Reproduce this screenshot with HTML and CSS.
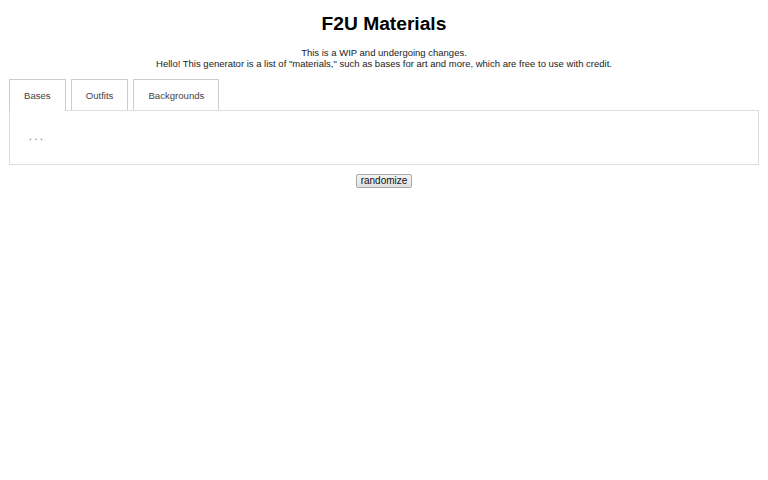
FILE: index.html
```html
<!DOCTYPE html>
<html>
<head>
<meta charset="utf-8">
<link rel="stylesheet" href="styles.css">
</head>
<body>
<h1 class="title">F2U Materials</h1>
<p class="intro">This is a WIP and undergoing changes.<br>Hello! This generator is a list of "materials," such as bases for art and more, which are free to use with credit.</p>
<div class="tabs">
  <ul class="tab-list">
    <li class="tab active">Bases</li>
    <li class="tab">Outfits</li>
    <li class="tab">Backgrounds</li>
  </ul>
  <div class="panel">. . .</div>
</div>
<div class="actions"><button class="btn">randomize</button></div>
</body>
</html>
```
FILE: styles.css
```css
body {
  margin: 8px 9px;
  font-family: "Liberation Sans", Arial, sans-serif;
  color: #222;
  background: #fff;
}
.title {
  margin: 5px 0 0;
  font-size: 19.2px;
  line-height: 22px;
  text-align: center;
  color: #000;
}
.intro {
  margin: 12px 0 0;
  font-size: 9.5px;
  line-height: 11px;
  text-align: center;
  color: #222;
}
.tabs {
  margin-top: 10px;
}
.tab-list {
  list-style: none;
  margin: 0;
  padding: 0;
  display: flex;
  gap: 5px;
  position: relative;
  z-index: 1;
}
.tab {
  padding: 0 14px;
  height: 30px;
  line-height: 31px;
  font-size: 9.6px;
  color: #444;
  border: 1px solid #ccc;
  border-bottom: none;
  background: #fff;
}
.tab.active {
  height: 31px;
  margin-bottom: -1px;
}
.panel {
  border: 1px solid #ddd;
  height: 53px;
  padding: 0 19px;
  line-height: 52px;
  font-size: 10px;
  color: #555;
}
.actions {
  text-align: center;
  margin-top: 5px;
}
.btn {
  font-family: "Liberation Sans", Arial, sans-serif;
  font-size: 10px;
  padding: 0 4px;
  height: 14px;
  line-height: 12px;
  color: #111;
  background: linear-gradient(#f4f4f4, #e0e0e0);
  border: 1px solid #aaa;
  border-radius: 2px;
}
```
